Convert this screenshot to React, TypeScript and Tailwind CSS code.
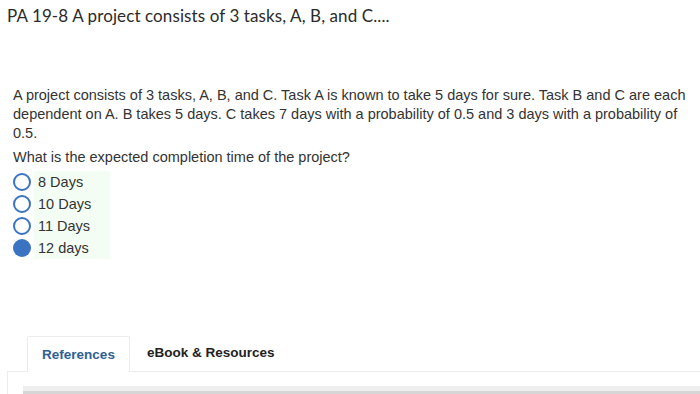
import React from "react";

const OPTIONS = [
  { label: "8 Days", checked: false },
  { label: "10 Days", checked: false },
  { label: "11 Days", checked: false },
  { label: "12 days", checked: true },
];

function Radio({ checked }: { checked: boolean }) {
  return checked ? (
    <span className="block h-[18px] w-[18px] rounded-full bg-[#3b72c2]" />
  ) : (
    <span className="block h-[18px] w-[18px] rounded-full border-2 border-[#3b72c2] bg-white" />
  );
}

export default function App() {
  return (
    <div className="h-[394px] w-[700px] overflow-hidden bg-white text-[#333]">
      {/* Title */}
      <h1 className="pl-[7px] pt-[5px] font-['Lato',sans-serif] text-[17px] leading-[22px] tracking-[0.1px] text-[#2b2b2b]">
        PA 19-8 A project consists of 3 tasks, A, B, and C....
      </h1>

      {/* Question */}
      <div className="pl-[13px] pr-[8px] pt-[59px] font-['Liberation_Sans',Arial,sans-serif] text-[14.5px] leading-[19px]">
        <p>
          A project consists of 3 tasks, A, B, and C. Task A is known to take 5 days for sure. Task B and C are each
          dependent on A. B takes 5 days. C takes 7 days with a probability of 0.5 and 3 days with a probability of
          0.5.
        </p>
        <p className="mt-[5px]">What is the expected completion time of the project?</p>

        <div className="mt-[4px] flex flex-col">
          {OPTIONS.map((o) => (
            <div key={o.label} className="flex h-[22px] items-center">
              <span className="mr-[3px] flex w-[18px] justify-center">
                <Radio checked={o.checked} />
              </span>
              <span className="flex h-full w-[76px] items-center bg-[#f3fdf3] pl-[4px]">{o.label}</span>
            </div>
          ))}
        </div>
      </div>

      {/* Tabs */}
      <div className="mt-[76px] pl-[7px] font-['Liberation_Sans',Arial,sans-serif] text-[13.5px] font-bold">
        <div className="flex items-end pl-[20px]">
          <div className="-mb-px flex h-[36px] w-[103px] items-center justify-center rounded-t-[2px] border border-b-0 border-[#ececec] bg-white pt-[1px] text-[#2f5f94]">
            References
          </div>
          <div className="flex h-[36px] items-center pl-[17px] pt-[1px] text-[#222]">eBook &amp; Resources</div>
        </div>
        <div className="border-t border-l border-[#ececec] bg-white pl-[15px] pt-[14px]">
          <div className="h-[5px] bg-[#eeeeee]" />
          <div className="h-[4px] bg-[#d6d6d6]" />
        </div>
      </div>
    </div>
  );
}
